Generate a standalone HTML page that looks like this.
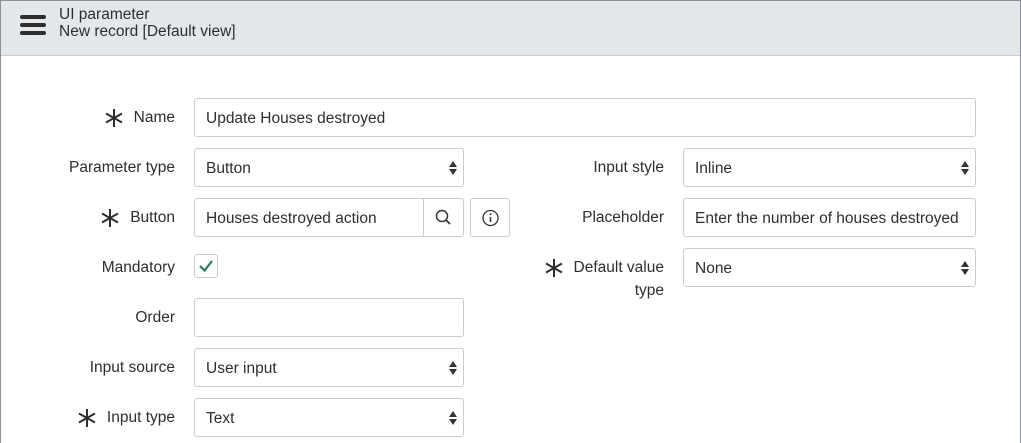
<!DOCTYPE html><html><head><style>
body{margin:0;width:1021px;height:442px;overflow:hidden;background:#fff;font-family:"Liberation Sans",sans-serif;color:#2e2e2e;}
.frame{position:absolute;left:0;top:0;width:1019px;height:442px;border-left:1px solid #8a9198;border-right:1px solid #8a9198;border-top:1px solid #8a9198;}
.hdr{position:absolute;left:1px;top:1px;width:1019px;height:54px;background:#e5e8eb;border-bottom:1px solid #c8ccd0;}
.t1{position:absolute;left:58px;top:5px;font-size:15.5px;}
.t2{position:absolute;left:58px;top:22px;font-size:15.5px;}
.bar{position:absolute;left:19px;width:26px;height:4px;border-radius:2px;background:#2e2e2e;}
.lab{position:absolute;font-size:15.5px;text-align:right;line-height:20px;}
.in{position:absolute;height:37px;border:1px solid #c9cdd1;border-radius:3px;box-sizing:content-box;font-size:15.5px;line-height:39px;padding-left:11px;background:#fff;}
.ar{position:absolute;right:14px;top:12px;width:0;height:0;}
.ar:before{content:"";position:absolute;left:0;top:0;border-left:4px solid transparent;border-right:4px solid transparent;border-bottom:6px solid #333;}
.ar:after{content:"";position:absolute;left:0;top:8px;border-left:4px solid transparent;border-right:4px solid transparent;border-top:6px solid #333;}
.ast{display:inline-block;vertical-align:middle;margin-right:10px;position:relative;top:0px;}
</style></head><body>
<div class="frame"></div>
<div class="hdr">
<div class="bar" style="top:14px"></div><div class="bar" style="top:22px"></div><div class="bar" style="top:30px"></div>
<div class="t1">UI parameter</div><div class="t2">New record [Default view]</div>
</div>
<svg width="0" height="0" style="position:absolute"><defs><g id="a"><path d="M10 1V19M2 5.5L18 14.5M2 14.5L18 5.5" stroke="#2e2e2e" stroke-width="2" fill="none"/></g></defs></svg>
<div class="lab" style="right:846px;top:108px"><svg class="ast" width="20" height="20"><use href="#a"/></svg>Name</div>
<div class="in" style="left:194px;top:98px;width:769px">Update Houses destroyed</div>

<div class="lab" style="right:846px;top:158px">Parameter type</div>
<div class="in" style="left:194px;top:148px;width:257px">Button<div class="ar"></div></div>
<div class="lab" style="right:357px;top:158px">Input style</div>
<div class="in" style="left:683px;top:148px;width:280px">Inline<div class="ar"></div></div>

<div class="lab" style="right:846px;top:208px"><svg class="ast" width="20" height="20"><use href="#a"/></svg>Button</div>
<div class="in" style="left:194px;top:198px;width:257px;">Houses destroyed action
<div style="position:absolute;left:228px;top:0;width:40px;height:37px;border-left:1px solid #c9cdd1">
<svg width="40" height="37"><circle cx="18" cy="17" r="5.5" fill="none" stroke="#333" stroke-width="1.5"/><line x1="22" y1="21" x2="26" y2="25" stroke="#333" stroke-width="1.7"/></svg></div></div>
<div class="in" style="left:470px;top:198px;width:38px;padding:0">
<svg width="38" height="37"><circle cx="19.5" cy="19" r="7.5" fill="none" stroke="#333" stroke-width="1.3"/><circle cx="19.5" cy="15.3" r="1" fill="#333"/><line x1="19.5" y1="18" x2="19.5" y2="23" stroke="#333" stroke-width="1.5"/></svg></div>
<div class="lab" style="right:357px;top:208px">Placeholder</div>
<div class="in" style="left:683px;top:198px;width:280px">Enter the number of houses destroyed</div>

<div class="lab" style="right:846px;top:258px">Mandatory</div>
<div style="position:absolute;left:194px;top:254px;width:22px;height:22px;border:1px solid #c9cdd1;border-radius:3px">
<svg width="22" height="22"><path d="M5 11 L9.5 15.5 L17 6" fill="none" stroke="#2b7a5e" stroke-width="2.2"/></svg></div>
<div class="lab" style="right:357px;top:258px"><svg class="ast" width="20" height="20"><use href="#a"/></svg>Default value</div>
<div class="lab" style="right:357px;top:281px">type</div>
<div class="in" style="left:683px;top:248px;width:280px">None<div class="ar"></div></div>

<div class="lab" style="right:846px;top:308px">Order</div>
<div class="in" style="left:194px;top:298px;width:257px"></div>

<div class="lab" style="right:846px;top:358px">Input source</div>
<div class="in" style="left:194px;top:348px;width:257px">User input<div class="ar"></div></div>

<div class="lab" style="right:846px;top:408px"><svg class="ast" width="20" height="20"><use href="#a"/></svg>Input type</div>
<div class="in" style="left:194px;top:398px;width:257px">Text<div class="ar"></div></div>
</body></html>
